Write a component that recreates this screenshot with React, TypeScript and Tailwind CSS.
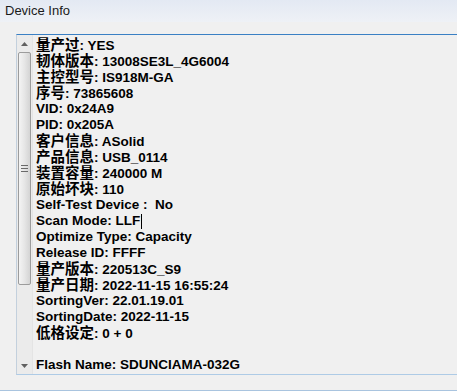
import React from 'react';

const lines: string[] = [
  '量产过: YES',
  '韧体版本: 13008SE3L_4G6004',
  '主控型号: IS918M-GA',
  '序号: 73865608',
  'VID: 0x24A9',
  'PID: 0x205A',
  '客户信息: ASolid',
  '产品信息: USB_0114',
  '装置容量: 240000 M',
  '原始坏块: 110',
  'Self-Test Device :  No',
  'Scan Mode: LLF',
  'Optimize Type: Capacity',
  'Release ID: FFFF',
  '量产版本: 220513C_S9',
  '量产日期: 2022-11-15 16:55:24',
  'SortingVer: 22.01.19.01',
  'SortingDate: 2022-11-15',
  '低格设定: 0 + 0',
  '',
  'Flash Name: SDUNCIAMA-032G',
];

// chinese label gets a bigger size than the latin part
function Line({ text }: { text: string }) {
  const m = text.match(/^([\u4e00-\u9fff]+)(.*)$/);
  if (!m) return <>{text}</>;
  return (
    <>
      <span className="text-[14.5px]">{m[1]}</span>
      {m[2]}
    </>
  );
}

function ScrollBar() {
  return (
    <div className="flex w-[16px] shrink-0 flex-col items-center border-r border-[#e4e4e4] bg-[#ebebeb]">
      {/* up arrow */}
      <div className="flex h-[17px] w-full items-center justify-center">
        <svg width="7" height="4" viewBox="0 0 7 4">
          <path d="M0 4 L3.5 0 L7 4 Z" fill="#606060" />
        </svg>
      </div>
      {/* thumb */}
      <div className="flex h-[233px] w-[13px] items-center justify-center rounded-[2px] border border-[#9c9c9c] bg-gradient-to-r from-[#f4f4f4] via-[#e6e6e6] to-[#d4d4d4]">
        <div className="flex flex-col gap-[2px]">
          <div className="h-px w-[7px] bg-[#6a6a6a]" />
          <div className="h-px w-[7px] bg-[#6a6a6a]" />
          <div className="h-px w-[7px] bg-[#6a6a6a]" />
        </div>
      </div>
      <div className="flex-1" />
      {/* down arrow */}
      <div className="flex h-[17px] w-full items-center justify-center">
        <svg width="7" height="4" viewBox="0 0 7 4">
          <path d="M0 0 L7 0 L3.5 4 Z" fill="#606060" />
        </svg>
      </div>
    </div>
  );
}

export default function App() {
  return (
    <div
      className="flex h-[391px] w-[457px] flex-col overflow-hidden bg-[#f0f0f0] text-black"
      style={{ fontFamily: '"Liberation Sans", "Noto Sans CJK SC", sans-serif' }}
    >
      {/* title */}
      <div className="flex h-[22px] items-center bg-gradient-to-b from-[#e3e9f3] to-[#eef1f6] px-[5px] text-[13px] text-[#1a1a1a]">
        Device Info
      </div>

      <div className="flex flex-1 flex-col border-b border-[#a9c4df] pl-[16px] pt-[12px] pb-[15px]">
        <div className="flex flex-1 border-l border-t border-b border-l-[#c3d0dd] border-t-[#3a80c4] border-b-[#aecbe6] bg-[#f0f0f0]">
          <ScrollBar />
          <div className="flex-1 pl-[3px] pt-[2px] text-[13.5px] font-bold leading-[16px]">
            {lines.map((line, i) => (
              <div key={i} className="flex h-[16px] items-baseline whitespace-pre">
                <Line text={line} />
                {line === 'Scan Mode: LLF' && (
                  <span className="ml-px h-[15px] w-px self-center bg-black" />
                )}
              </div>
            ))}
          </div>
        </div>
      </div>
    </div>
  );
}
